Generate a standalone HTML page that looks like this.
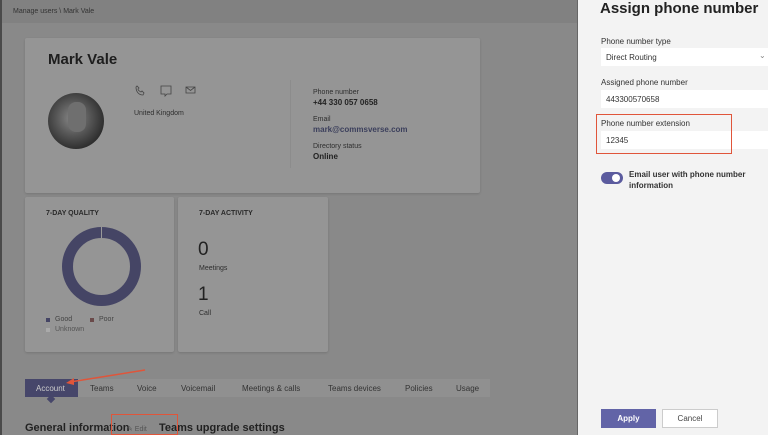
<!DOCTYPE html>
<html><head><meta charset="utf-8"><style>
*{margin:0;padding:0;box-sizing:border-box}
body{width:768px;height:435px;overflow:hidden;background:#898989;font-family:"Liberation Sans",sans-serif;position:relative;color:#222}
.a{position:absolute}
.card{position:absolute;background:#959595;border-radius:2px;box-shadow:0 1px 2px rgba(0,0,0,.15)}
.lbl{font-size:7px;color:#2e2e2e}
.panel{position:absolute;left:577px;top:0;width:191px;height:435px;background:#f3f3f3;border-left:1px solid #666}
.inp{position:absolute;left:23px;width:175px;height:18px;background:#fff;font-size:8px;color:#333;padding:5px 5px}
</style></head><body>
<div class="a" style="left:0;top:0;width:2px;height:435px;background:#4a4a4a"></div>
<div class="a" style="left:2px;top:0;width:575px;height:23px;background:#818181"></div>
<div class="a" style="left:13px;top:8px;font-size:7px;color:#333">Manage users \ Mark Vale</div>
<div class="card" style="left:25px;top:38px;width:455px;height:155px"></div>
<div class="a" style="left:48px;top:51px;font-size:15px;font-weight:bold;color:#1e1e1e">Mark Vale</div>
<div class="a" style="left:48px;top:93px;width:56px;height:56px;border-radius:50%;background:radial-gradient(circle at 45% 45%,#8a8a8a,#555 40%,#2a2a2a 75%)"></div>
<div class="a" style="left:68px;top:102px;width:18px;height:30px;border-radius:8px;background:#6f6f6f"></div>
<svg class="a" style="left:134px;top:85px" width="70" height="12" fill="none" stroke="#444" stroke-width="0.8"><path d="M2 2 C2 7 5 10 9 10 L10 8 8 6 7 7 C5 6 4 5 4 4 L5 3 3 1Z"/><path d="M27 1h10v8h-4l-2 2v-2h-4z"/><path d="M52 2h9v6h-9zM52 2l4.5 3.5L61 2"/></svg>
<div class="a lbl" style="left:134px;top:110px">United Kingdom</div>
<div class="a" style="left:290px;top:80px;width:1px;height:88px;background:#8c8c8c"></div>
<div class="a lbl" style="left:313px;top:89px">Phone number</div>
<div class="a" style="left:313px;top:98px;font-size:8px;font-weight:bold;color:#222">+44 330 057 0658</div>
<div class="a lbl" style="left:313px;top:116px">Email</div>
<div class="a" style="left:313px;top:125px;font-size:8px;font-weight:bold;color:#3b3f5c">mark@commsverse.com</div>
<div class="a lbl" style="left:313px;top:143px">Directory status</div>
<div class="a" style="left:313px;top:152px;font-size:8px;font-weight:bold;color:#222">Online</div>

<div class="card" style="left:25px;top:197px;width:149px;height:155px"></div>
<div class="a" style="left:46px;top:210px;font-size:7px;font-weight:bold;color:#2a2a2a">7-DAY QUALITY</div>
<div class="a" style="left:62px;top:227px;width:79px;height:79px;border-radius:50%;border:11px solid #454565"></div>
<div class="a" style="left:101px;top:227px;width:1px;height:11px;background:#999"></div>
<div class="a" style="left:46px;top:318px;width:4px;height:4px;background:#454565"></div>
<div class="a lbl" style="left:55px;top:316px;color:#444">Good</div>
<div class="a" style="left:90px;top:318px;width:4px;height:4px;background:#6a4a4a"></div>
<div class="a lbl" style="left:99px;top:316px;color:#444">Poor</div>
<div class="a" style="left:46px;top:328px;width:4px;height:4px;background:#aaa"></div>
<div class="a lbl" style="left:55px;top:326px;color:#555">Unknown</div>

<div class="card" style="left:178px;top:197px;width:150px;height:155px"></div>
<div class="a" style="left:199px;top:210px;font-size:7px;font-weight:bold;color:#2a2a2a">7-DAY ACTIVITY</div>
<div class="a" style="left:198px;top:239px;font-size:19px;color:#222">0</div>
<div class="a lbl" style="left:199px;top:265px">Meetings</div>
<div class="a" style="left:198px;top:284px;font-size:19px;color:#222">1</div>
<div class="a lbl" style="left:199px;top:310px">Call</div>

<div class="a" style="left:25px;top:379px;width:465px;height:18px;background:#909090"></div>
<div class="a" style="left:25px;top:379px;width:53px;height:18px;background:#46466a"></div>
<div class="a" style="left:48px;top:396px;width:6px;height:6px;background:#46466a;transform:rotate(45deg)"></div>
<div class="a" style="left:36px;top:384px;font-size:8px;color:#ccc">Account</div>
<div class="a" style="top:384px;font-size:8px;color:#333;left:90px">Teams</div>
<div class="a" style="top:384px;font-size:8px;color:#333;left:137px">Voice</div>
<div class="a" style="top:384px;font-size:8px;color:#333;left:181px">Voicemail</div>
<div class="a" style="top:384px;font-size:8px;color:#333;left:242px">Meetings &amp; calls</div>
<div class="a" style="top:384px;font-size:8px;color:#333;left:328px">Teams devices</div>
<div class="a" style="top:384px;font-size:8px;color:#333;left:405px">Policies</div>
<div class="a" style="top:384px;font-size:8px;color:#333;left:456px">Usage</div>
<svg class="a" style="left:60px;top:368px" width="90" height="20"><path d="M85 2 L10 14" stroke="#e0553a" stroke-width="1.5"/><path d="M6 15 L14 10 L14 17Z" fill="#e0553a"/></svg>

<div class="a" style="left:25px;top:422px;font-size:11px;font-weight:bold;color:#222">General information</div>
<div class="a" style="left:127px;top:425px;font-size:7px;color:#555">✎ Edit</div>
<div class="a" style="left:159px;top:422px;font-size:11px;font-weight:bold;color:#222">Teams upgrade settings</div>
<div class="a" style="left:111px;top:414px;width:67px;height:21px;border:1.5px solid #e0553a"></div>

<div class="panel">
<div class="a" style="left:22px;top:0px;font-size:15px;font-weight:bold;color:#222">Assign phone number</div>
<div class="a" style="left:23px;top:37px;font-size:8px;color:#333">Phone number type</div>
<div class="inp" style="top:48px">Direct Routing<span style="position:absolute;left:158px;top:3px;color:#888">⌄</span></div>
<div class="a" style="left:23px;top:78px;font-size:8px;color:#333">Assigned phone number</div>
<div class="inp" style="top:90px">443300570658</div>
<div class="a" style="left:23px;top:119px;font-size:8px;color:#333">Phone number extension</div>
<div class="inp" style="top:131px">12345</div>
<div class="a" style="left:18px;top:114px;width:136px;height:40px;border:1.5px solid #e0553a"></div>
<div class="a" style="left:23px;top:172px;width:22px;height:12px;border-radius:6px;background:#5b5b9e"></div>
<div class="a" style="left:34px;top:174px;width:8px;height:8px;border-radius:50%;background:#fff"></div>
<div class="a" style="left:51px;top:169px;font-size:8px;font-weight:bold;color:#333;line-height:11px;width:130px">Email user with phone number information</div>
<div class="a" style="left:23px;top:409px;width:55px;height:19px;background:#6264a7;color:#fff;font-size:8px;font-weight:bold;text-align:center;line-height:19px">Apply</div>
<div class="a" style="left:84px;top:409px;width:56px;height:19px;background:#fff;border:1px solid #ccc;color:#444;font-size:8px;text-align:center;line-height:17px">Cancel</div>
</div>
</body></html>
